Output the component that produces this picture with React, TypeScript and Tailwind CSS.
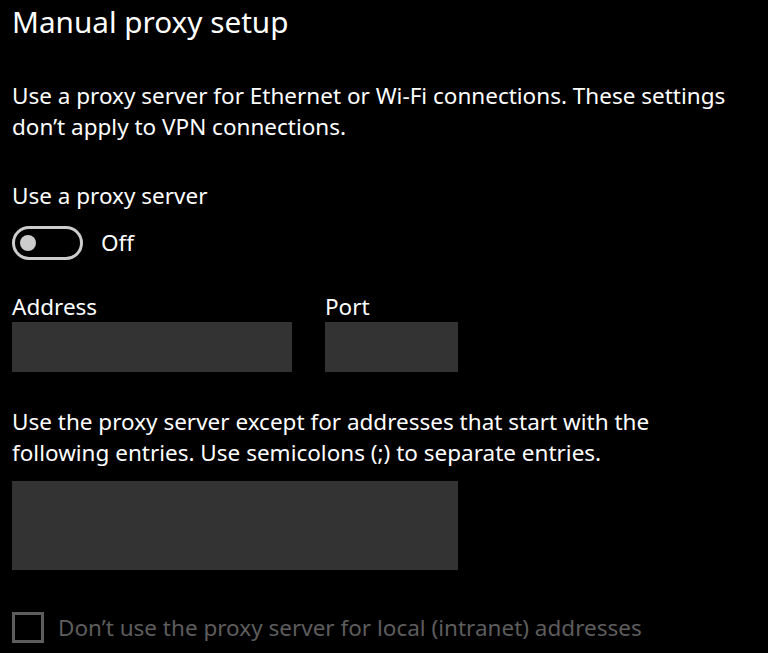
export default function App() {
	return (
		<div
			className="w-[768px] h-[653px] overflow-hidden bg-black text-white px-[12px]"
			style={{ fontFamily: '"Noto Sans", "Open Sans", sans-serif' }}
		>
			<h1 className="text-[29.7px] leading-[44px] font-normal">Manual proxy setup</h1>

			<p className="mt-[36px] text-[22.5px] leading-[31px] w-[735px]">
				Use a proxy server for Ethernet or Wi-Fi connections. These settings
				don’t apply to VPN connections.
			</p>

			<div className="mt-[38px] text-[22.5px] leading-[31px]">Use a proxy server</div>

			<div className="mt-[15px] flex items-center gap-[18px]">
				<div className="w-[71px] h-[34px] rounded-full border-[3px] border-[#cccccc] flex items-center pl-[5px]">
					<div className="w-[16px] h-[16px] rounded-full bg-[#cccccc]" />
				</div>
				<span className="text-[22.5px] leading-[30px]">Off</span>
			</div>

			<div className="mt-[33px] flex gap-[33px]">
				<div className="flex flex-col">
					<span className="text-[22.5px] leading-[28px]">Address</span>
					<div className="mt-px w-[280px] h-[50px] bg-[#333333]" />
				</div>
				<div className="flex flex-col">
					<span className="text-[22.5px] leading-[28px]">Port</span>
					<div className="mt-px w-[133px] h-[50px] bg-[#333333]" />
				</div>
			</div>

			<p className="mt-[34px] text-[22.5px] leading-[31px] w-[700px]">
				Use the proxy server except for addresses that start with the
				following entries. Use semicolons (;) to separate entries.
			</p>

			<div className="mt-[13px] w-[446px] h-[89px] bg-[#333333]" />

			<div className="mt-[42px] flex items-center gap-[14px]">
				<div className="w-[32px] h-[31px] border-[3px] border-[#5d5d5d]" />
				<span className="text-[22.5px] leading-[28px] text-[#5d5d5d]">
					Don’t use the proxy server for local (intranet) addresses
				</span>
			</div>
		</div>
	);
}
